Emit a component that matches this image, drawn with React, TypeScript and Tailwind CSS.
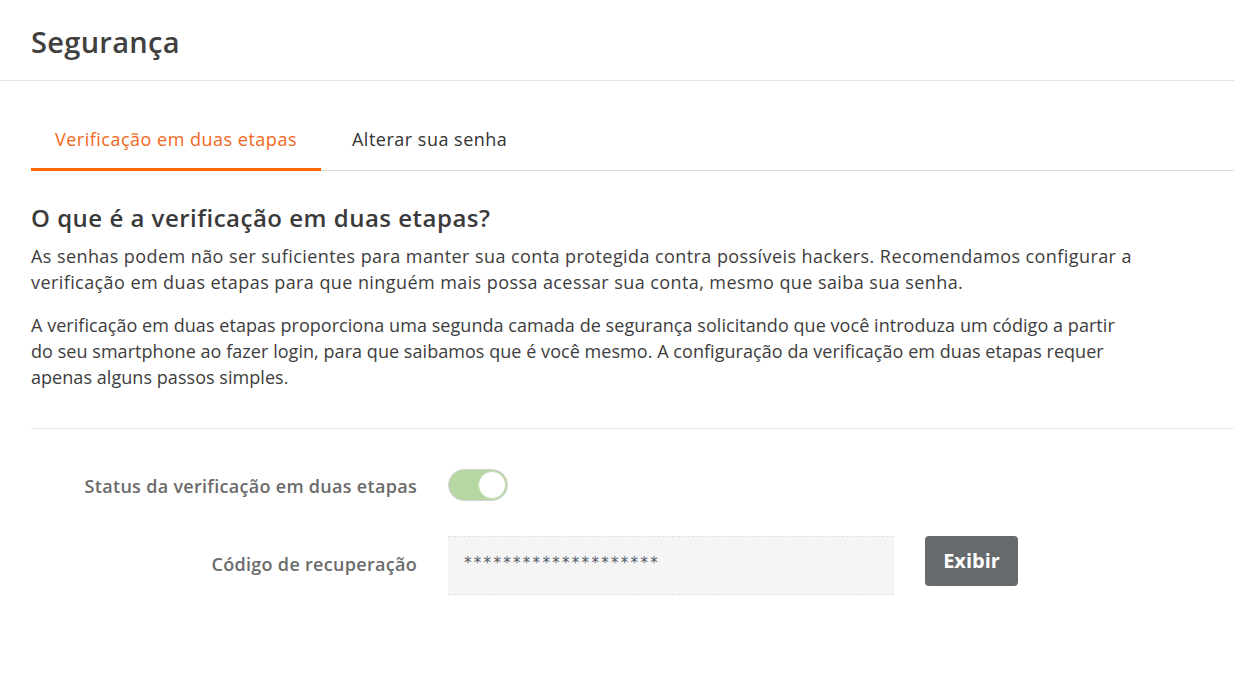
import { useState } from 'react';

const font = "font-['Open_Sans','Noto_Sans',sans-serif]";

export default function App() {
  const [tab, setTab] = useState('2fa');
  const [enabled, setEnabled] = useState(true);
  const [show, setShow] = useState(false);

  return (
    <div className={`min-h-[679px] bg-white text-[#3d3d3d] ${font}`}>
      {/* Header */}
      <div className="h-[81px] border-b border-[#e3e3e3] px-[31px] flex items-center">
        <h1 className="text-[29px] tracking-[0.3px] font-semibold text-[#404040] leading-none pt-[2px]">Segurança</h1>
      </div>

      <div className="pl-[31px]">
        {/* Tabs */}
        <div className="mt-[30px] flex border-b border-[#dcdcdc]">
          <button
            onClick={() => setTab('2fa')}
            className={`h-[60px] px-6 text-[18px] tracking-[0.5px] -mb-px border-b-[3px] ${
              tab === '2fa' ? 'text-[#f26722] border-[#ff6600]' : 'text-[#333] border-transparent'
            }`}
          >
            Verificação em duas etapas
          </button>
          <button
            onClick={() => setTab('senha')}
            className={`h-[60px] px-[31px] text-[18px] tracking-[0.5px] -mb-px border-b-[3px] ${
              tab === 'senha' ? 'text-[#f26722] border-[#ff6600]' : 'text-[#333] border-transparent'
            }`}
          >
            Alterar sua senha
          </button>
        </div>

        {/* Intro */}
        <div className="pt-[32px]">
          <h2 className="text-[24px] tracking-[0.5px] font-semibold text-[#3a3a3a] leading-[30px]">
            O que é a verificação em duas etapas?
          </h2>
          <p className="w-[1108px] mt-[10px] text-[18px] tracking-[0.42px] leading-[26px] text-[#3d3d3d]">
            As senhas podem não ser suficientes para manter sua conta protegida contra possíveis hackers. Recomendamos configurar a verificação em duas etapas para que ninguém mais possa acessar sua conta, mesmo que saiba sua senha.
          </p>
          <p className="w-[1170px] mt-[17px] text-[18px] tracking-[0.05px] leading-[26px] text-[#3d3d3d]">
            A verificação em duas etapas proporciona uma segunda camada de segurança solicitando que você introduza um código a partir
            <br />
            do seu smartphone ao fazer login, para que saibamos que é você mesmo. A configuração da verificação em duas etapas requer
            <br />
            apenas alguns passos simples.
          </p>
        </div>

        <div className="mt-[38px] border-t border-[#ececec]" />

        {/* Settings */}
        <div className="pt-[40px] flex flex-col">
          <div className="flex items-center h-[32px]">
            <div className="w-[386px] text-right text-[18px] tracking-[0.3px] font-semibold text-[#6b6b6b] pt-[3px]">
              Status da verificação em duas etapas
            </div>
            <button
              onClick={() => setEnabled(!enabled)}
              className={`ml-[31px] w-[60px] h-[32px] rounded-full border border-[#d4d4d4] flex items-center p-[1px] ${
                enabled ? 'bg-[#b6d7a2] justify-end' : 'bg-[#eee] justify-start'
              }`}
            >
              <span className="block w-[28px] h-[28px] rounded-full bg-white border border-[#c9e2b9]" />
            </button>
          </div>

          <div className="flex items-start mt-[35px]">
            <div className="w-[386px] h-[59px] flex items-center justify-end text-[18px] tracking-[0.3px] font-semibold text-[#6b6b6b] pb-[2px]">
              Código de recuperação
            </div>
            <div className="ml-[31px] w-[446px] h-[59px] bg-[#f5f5f5] border-y border-dashed border-[#e2e2e2] flex items-center px-4 pb-[4px] text-[15px] tracking-[2.3px] text-[#4f5a66] font-['DejaVu_Sans',sans-serif]">
              {show ? 'A7K2-9QX4-MP3L-8ZR6' : '********************'}
            </div>
            <button
              onClick={() => setShow(!show)}
              className="ml-[31px] w-[93px] h-[50px] rounded-[4px] bg-[#676a6d] text-white text-[20px] font-bold"
            >
              Exibir
            </button>
          </div>
        </div>
      </div>
    </div>
  );
}
